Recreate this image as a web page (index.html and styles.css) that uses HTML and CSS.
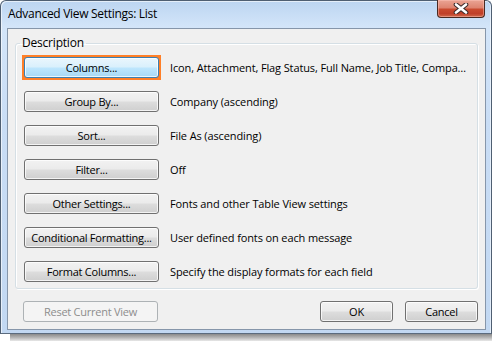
FILE: index.html
```html
<!DOCTYPE html>
<html>
<head>
<meta charset="utf-8">
<link rel="stylesheet" href="styles.css">
</head>
<body>
<div class="window">
  <div class="titlebar">
    <span class="title">Advanced View Settings: List</span>
    <div class="close">
      <svg width="16" height="11" viewBox="0 0 16 11">
        <path d="M3 1.5 L13 9.5 M13 1.5 L3 9.5" stroke="#3a2a2a" stroke-width="4.6" stroke-linecap="round" fill="none"/>
        <path d="M3 1.5 L13 9.5 M13 1.5 L3 9.5" stroke="#ffffff" stroke-width="2.6" stroke-linecap="round" fill="none"/>
      </svg>
    </div>
  </div>
  <div class="client">
    <fieldset class="group">
      <legend>Description</legend>
      <div class="row">
        <span class="mark"><button class="btn hot">Columns...</button></span>
        <span class="desc">Icon, Attachment, Flag Status, Full Name, Job Title, Compa…</span>
      </div>
      <div class="row">
        <button class="btn">Group By...</button>
        <span class="desc">Company (ascending)</span>
      </div>
      <div class="row">
        <button class="btn">Sort...</button>
        <span class="desc">File As (ascending)</span>
      </div>
      <div class="row">
        <button class="btn">Filter...</button>
        <span class="desc">Off</span>
      </div>
      <div class="row">
        <button class="btn">Other Settings...</button>
        <span class="desc">Fonts and other Table View settings</span>
      </div>
      <div class="row">
        <button class="btn">Conditional Formatting...</button>
        <span class="desc">User defined fonts on each message</span>
      </div>
      <div class="row">
        <button class="btn">Format Columns...</button>
        <span class="desc">Specify the display formats for each field</span>
      </div>
    </fieldset>
    <div class="footer">
      <button class="btn disabled">Reset Current View</button>
      <div class="actions">
        <button class="btn small">OK</button>
        <button class="btn small">Cancel</button>
      </div>
    </div>
  </div>
</div>
<div class="shadow"></div>
</body>
</html>
```

FILE: styles.css
```css
html, body {
  margin: 0;
  padding: 0;
  background: #ffffff;
}
body {
  width: 495px;
  height: 341px;
  overflow: hidden;
  font-family: "Open Sans", "Noto Sans", sans-serif;
  font-size: 11px;
  color: #000;
}
.window {
  width: 492px;
  height: 334px;
  box-sizing: border-box;
  border: 1px solid #4f5f72;
  border-bottom-color: #5b6b7e;
  border-radius: 6px 6px 0 0;
  background: linear-gradient(to bottom, #bcd5f1 0px, #d3e5f9 26px, #c9ddf5 120px, #c2d8f2 334px);
  box-shadow: inset 1px 1px 0 rgba(255,255,255,0.6), inset -1px 0 0 rgba(255,255,255,0.5);
  padding: 0 5px 3px 6px;
  display: flex;
  flex-direction: column;
}
.titlebar {
  height: 27px;
  display: flex;
  justify-content: space-between;
  align-items: flex-start;
  flex-shrink: 0;
}
.title {
  padding-left: 1px;
  margin-top: 5px;
  font-size: 12px;
  letter-spacing: -0.3px;
  line-height: 16px;
  color: #000;
}
.close {
  width: 48px;
  height: 18px;
  margin-top: -1px;
  margin-right: 1px;
  box-sizing: border-box;
  border: 1px solid #4a2a22;
  border-top: none;
  border-radius: 0 0 4px 4px;
  background: linear-gradient(to bottom, #eaa494 0%, #de8470 45%, #c94a2f 55%, #c0402a 80%, #d06a4c 100%);
  box-shadow: inset 0 0 0 1px rgba(255,200,190,0.45);
  display: flex;
  align-items: center;
  justify-content: center;
}
.close svg {
  display: block;
}
.client {
  flex: 1;
  border: 1px solid #8696aa;
  background: #f0f0f0;
  display: flex;
  flex-direction: column;
  padding: 0 7px 7px 7px;
}
.group {
  margin: 7px 0 0 0;
  padding: 7px 8px 6px 8px;
  border: 1px solid #d5dfe5;
  border-radius: 3px;
  box-shadow: inset 1px 1px 0 #fff, 1px 1px 0 #fff;
  display: flex;
  flex-direction: column;
  gap: 13px;
  min-width: 0;
}
.group legend {
  padding: 0 2px;
  margin-left: -4px;
  font-size: 12px;
  letter-spacing: -0.2px;
  line-height: 14px;
  color: #000;
}
.row {
  display: flex;
  align-items: center;
  gap: 11px;
  height: 21px;
}
.btn {
  font-family: inherit;
  font-size: 11px;
  letter-spacing: -0.25px;
  color: #000;
  width: 135px;
  height: 21px;
  padding: 0;
  margin: 0;
  box-sizing: border-box;
  border: 1px solid #707070;
  border-radius: 3px;
  background: linear-gradient(to bottom, #f2f2f2 0%, #ebebeb 48%, #dddddd 52%, #cfcfcf 100%);
  box-shadow: inset 0 0 0 1px rgba(255,255,255,0.75);
  flex-shrink: 0;
  line-height: 19px;
  white-space: nowrap;
  display: block;
}
.mark {
  display: block;
  flex-shrink: 0;
  width: 139px;
  height: 25px;
  box-sizing: border-box;
  border: 3px solid #ff7f27;
  margin: -2px;
}
.mark .btn {
  margin: -1px;
}
.btn.hot {
  border-color: #3c7fb1;
  background: linear-gradient(to bottom, #eaf6fd 0%, #d9f0fc 48%, #bee6fd 52%, #a7d9f5 100%);
}
.btn.disabled {
  border-color: #adb2b5;
  background: #f4f4f4;
  color: #8d8d8d;
  box-shadow: none;
}
.btn.small {
  width: 73px;
}
.desc {
  white-space: nowrap;
  line-height: 14px;
  letter-spacing: -0.12px;
}
.footer {
  margin-top: 12px;
  margin-left: 8px;
  display: flex;
  justify-content: space-between;
}
.actions {
  display: flex;
  gap: 12px;
}
.shadow {
  height: 7px;
  margin-left: 10px;
  width: 482px;
  background: linear-gradient(to bottom, #8a8a8a 0%, #b5b5b5 50%, #e8e8e8 100%);
}
```
